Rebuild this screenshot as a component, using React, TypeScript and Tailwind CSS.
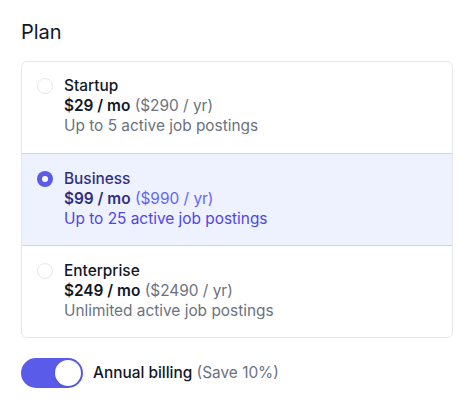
import { useState } from 'react'

const plans = [
  { name: 'Startup', monthly: '$29', yearly: '$290', limit: 'Up to 5 active job postings' },
  { name: 'Business', monthly: '$99', yearly: '$990', limit: 'Up to 25 active job postings' },
  { name: 'Enterprise', monthly: '$249', yearly: '$2490', limit: 'Unlimited active job postings' },
]

export default function App() {
  const [selected, setSelected] = useState('Business')
  const [annual, setAnnual] = useState(true)

  return (
    <div className="min-h-screen bg-white px-[21px] pt-[18px] font-['Inter',sans-serif] text-[#111827]">
      <h2 className="text-[20px] leading-[28px] font-normal">Plan</h2>

      <div className="mt-[15px] w-[432px] overflow-hidden rounded-md border border-[#e5e7eb] bg-white">
        {plans.map((plan, i) => {
          const active = selected === plan.name
          return (
            <label
              key={plan.name}
              className={
                'flex cursor-pointer gap-[11px] px-[15px] ' +
                (i > 0 ? 'border-t pt-[15px] pb-[16px] ' : 'pt-[14px] pb-[17px] ') +
                (active
                  ? 'relative z-10 -mb-px border-b border-[#c7d2fe] bg-[#eef2ff]'
                  : 'border-[#e5e7eb]')
              }
            >
              <input
                type="radio"
                name="plan"
                checked={active}
                onChange={() => setSelected(plan.name)}
                className="sr-only"
              />
              <span
                className={
                  'mt-[2px] flex h-[16px] w-[16px] shrink-0 items-center justify-center rounded-full ' +
                  (active ? 'bg-[#5b5bea]' : 'border border-[#e5e7eb] bg-white')
                }
              >
                {active && <span className="h-[6px] w-[6px] rounded-full bg-white" />}
              </span>
              <span className="flex flex-col text-[15.4px] leading-[20px]">
                <span className={'font-medium ' + (active ? 'text-[#312e81]' : 'text-[#111827]')}>
                  {plan.name}
                </span>
                <span>
                  <span className={'font-semibold ' + (active ? 'text-[#312e81]' : 'text-[#111827]')}>
                    {plan.monthly} / mo
                  </span>{' '}
                  <span className={active ? 'text-[#6366f1]' : 'text-[#6b7280]'}>({plan.yearly} / yr)</span>
                </span>
                <span className={active ? 'text-[#4f46e5]' : 'text-[#6b7280]'}>{plan.limit}</span>
              </span>
            </label>
          )
        })}
      </div>

      <div className="mt-[20px] flex items-center gap-[10px]">
        <button
          type="button"
          onClick={() => setAnnual((v) => !v)}
          className={
            'flex h-[30px] w-[62px] items-center rounded-full p-[2px] transition-colors ' +
            (annual ? 'justify-end bg-[#5b5bea]' : 'justify-start bg-[#e5e7eb]')
          }
        >
          <span className="h-[26px] w-[26px] rounded-full bg-white shadow" />
        </button>
        <span className="text-[15.4px] leading-[20px]">
          <span className="font-medium text-[#111827]">Annual billing</span>{' '}
          <span className="text-[#6b7280]">(Save 10%)</span>
        </span>
      </div>
    </div>
  )
}
